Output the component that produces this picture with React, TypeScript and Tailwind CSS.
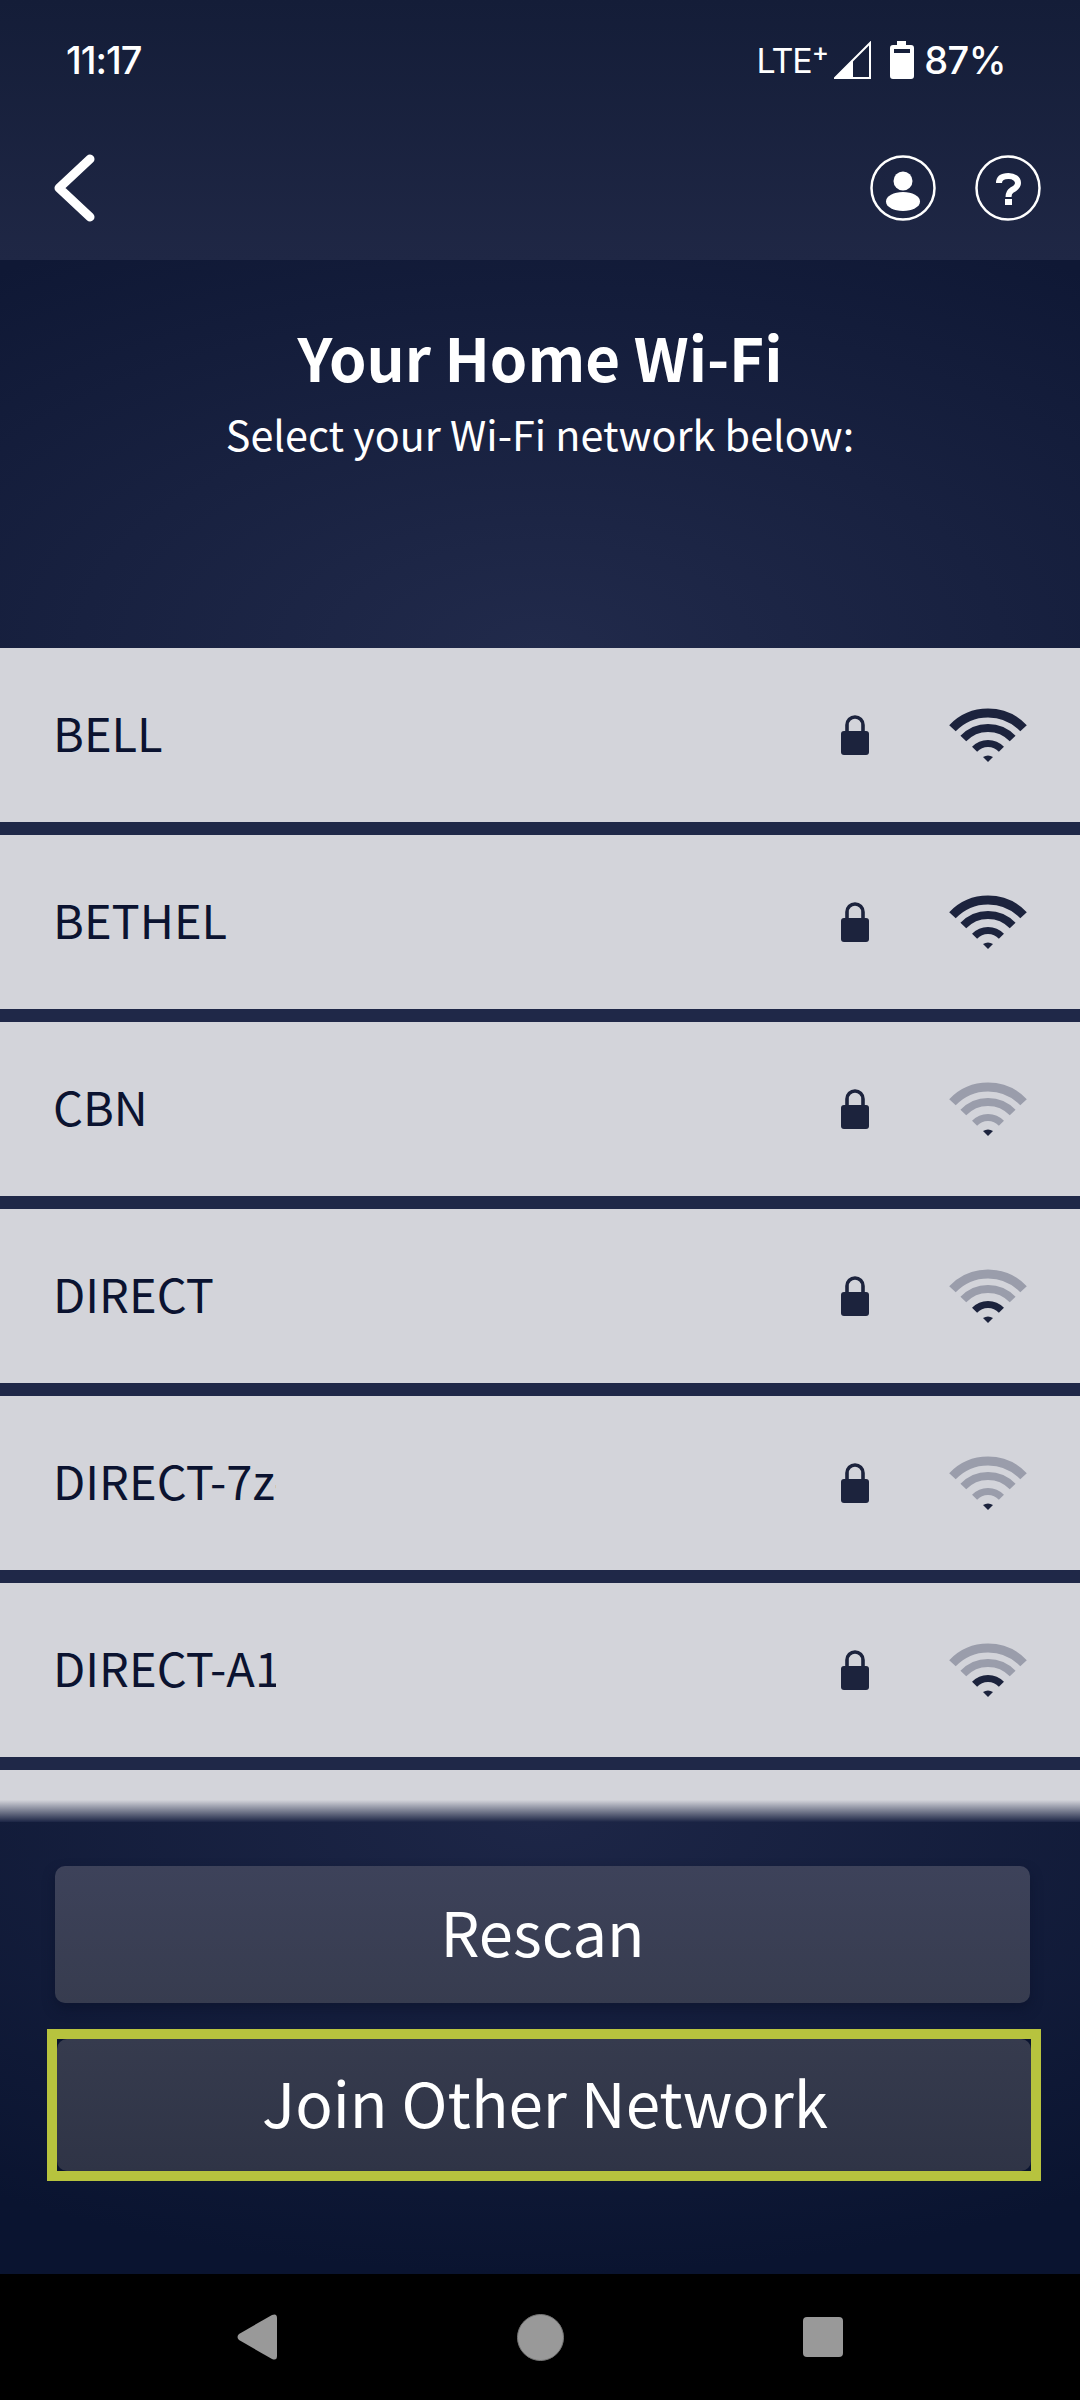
const SIN = Math.sin((46.5 * Math.PI) / 180)
const COS = Math.cos((46.5 * Math.PI) / 180)

const bandPath = (r: number) =>
  `M${40 - r * SIN} ${56 - r * COS}A${r} ${r} 0 0 1 ${40 + r * SIN} ${56 - r * COS}`

// weak = how many of the outer bands are greyed out
function WifiIcon({ weak = 0 }: { weak?: number }) {
  const bands = [
    { r: 49, w: 9 },
    { r: 34, w: 8 },
    { r: 18.5, w: 7 },
  ]
  return (
    <svg width="80" height="58" viewBox="0 0 80 58" fill="none">
      {bands.map((b, i) => (
        <path key={b.r} d={bandPath(b.r)} strokeWidth={b.w} stroke={i < weak ? '#9a9dab' : '#1c233d'} />
      ))}
      <path d="M35 51L40 56L45 51Q40 48 35 51Z" fill="#1c233d" />
    </svg>
  )
}

function LockIcon() {
  return (
    <svg width="28" height="40" viewBox="0 0 28 40" fill="none">
      <path d="M6 18V10a8 8 0 0 1 16 0v8" stroke="#1c233d" strokeWidth="3.6" />
      <rect x="0" y="16" width="28" height="24" rx="3" fill="#1c233d" />
    </svg>
  )
}

const networks = [
  { name: 'BELL', weak: 0 },
  { name: 'BETHEL', weak: 0 },
  { name: 'CBN', weak: 3 },
  { name: 'DIRECT', weak: 2 },
  { name: 'DIRECT-7z-WiFi', weak: 3 },
  { name: 'DIRECT-A1', weak: 2 },
]

function NetworkRow({ name, weak }: { name: string; weak: number }) {
  return (
    <div className="flex h-[174px] shrink-0 items-center bg-[#d3d4da] pl-[53px]">
      <div className="mb-[6px] w-[223px] overflow-hidden whitespace-nowrap text-[47px] text-[#0b1330]">{name}</div>
      <div className="ml-[565px] flex items-center">
        <LockIcon />
      </div>
      <div className="ml-[79px] flex items-center">
        <WifiIcon weak={weak} />
      </div>
    </div>
  )
}

export default function App() {
  return (
    <div className="flex h-[2400px] w-[1080px] flex-col overflow-hidden bg-black font-['Noto_Sans_CJK_SC','Noto_Sans',sans-serif] text-white">
      <header className="h-[260px] shrink-0 bg-gradient-to-b from-[#141d38] to-[#1f2745]">
        <div className="flex h-[118px] items-center pl-[66px] pr-[74px] pt-[2px] font-['Inter',sans-serif] text-white">
          <span className="text-[38px] font-medium tracking-[-1px]">11:17</span>
          <span className="ml-auto text-[34px] tracking-[-1px]">LTE</span>
          <span className="mb-[16px] text-[26px] font-medium leading-none">+</span>
          <svg className="ml-[5px]" width="38" height="38" viewBox="0 0 38 38" fill="none">
            <path d="M1 37L36 2V37Z" stroke="white" strokeWidth="2" />
            <path d="M1 37L19 19V37Z" fill="white" />
          </svg>
          <svg className="ml-[18px]" width="24" height="38" viewBox="0 0 24 38" fill="white">
            <path d="M7 0H16V4H21Q24 4 24 7V35Q24 38 21 38H3Q0 38 0 35V7Q0 4 3 4H7ZM4 8V12H20V8Z" fillRule="evenodd" />
          </svg>
          <span className="ml-[10px] text-[38px] font-medium tracking-[-0.5px]">87%</span>
        </div>
        <div className="mt-[37px] flex h-[66px] items-center pl-[52px] pr-[39px]">
          <svg width="44" height="68" viewBox="0 0 44 68" fill="none">
            <path d="M38 5L7 34L38 63" stroke="white" strokeWidth="9" strokeLinecap="round" strokeLinejoin="round" />
          </svg>
          <svg className="ml-auto" width="66" height="66" viewBox="0 0 66 66" fill="none">
            <circle cx="33" cy="33" r="31.5" stroke="white" strokeWidth="2.5" />
            <circle cx="33" cy="26" r="9.5" fill="white" />
            <ellipse cx="33" cy="46.5" rx="17" ry="9.5" fill="white" />
          </svg>
          <svg className="ml-[39px]" width="66" height="66" viewBox="0 0 66 66" fill="none">
            <circle cx="33" cy="33" r="31.5" stroke="white" strokeWidth="2.5" />
            <path d="M24 28C24 23 28 21 33.5 21C39 21 43 24 43 28C43 32 40 33.5 37 35C34.5 36.5 33.5 38 33.5 42" stroke="white" strokeWidth="6" />
            <rect x="30" y="44" width="7" height="6" fill="white" />
          </svg>
        </div>
      </header>

      <section className="flex h-[388px] shrink-0 flex-col items-center bg-[radial-gradient(ellipse_85%_120%_at_50%_100%,#212a4b_0%,#0f1835_100%)] pt-[56px]">
        <h1 className="text-[60px] font-bold leading-[80px]">Your Home Wi-Fi</h1>
        <p className="mt-[11px] text-[41.3px] leading-[52px]">Select your Wi-Fi network below:</p>
      </section>

      <div className="relative flex h-[1174px] shrink-0 flex-col gap-[13px] overflow-hidden bg-[#1f2848]">
        {networks.map((n) => (
          <NetworkRow key={n.name} name={n.name} weak={n.weak} />
        ))}
        <div className="h-[174px] shrink-0 bg-[#d3d4da]" />
        <div className="absolute inset-x-0 bottom-0 h-[22px] bg-gradient-to-b from-transparent to-[#1c2545]" />
      </div>

      <footer className="flex h-[452px] shrink-0 flex-col bg-[radial-gradient(ellipse_90%_100%_at_50%_0%,#1d2647_0%,#0a1430_100%)] pl-[47px] pt-[44px]">
        <button className="ml-[8px] h-[137px] w-[975px] rounded-[10px] bg-gradient-to-b from-[#3d425a] to-[#373c4f] pb-[6px] text-[61.5px] shadow-[0_6px_12px_rgba(10,16,40,0.5)]">
          Rescan
        </button>
        <div className="mt-[26px] h-[152px] w-[994px] border-[10px] border-[#b7c33e] bg-[#0a1430]">
          <button className="h-full w-full rounded-[10px] bg-gradient-to-b from-[#363b4e] to-[#2f3446] pb-[8px] pl-[2px] text-[62px]">
            Join Other Network
          </button>
        </div>
      </footer>

      <nav className="flex h-[126px] shrink-0 items-center bg-black">
        <svg className="ml-[237px]" width="40" height="46" viewBox="0 0 40 46" fill="#999">
          <path d="M35 1Q40 -1 40 4V42Q40 47 35 45L2 26Q-1 23 2 20Z" />
        </svg>
        <div className="ml-[240px] h-[47px] w-[47px] rounded-full border border-[#777] bg-[#999]" />
        <div className="ml-[239px] h-[40px] w-[40px] rounded-[4px] bg-[#999]" />
      </nav>
    </div>
  )
}
